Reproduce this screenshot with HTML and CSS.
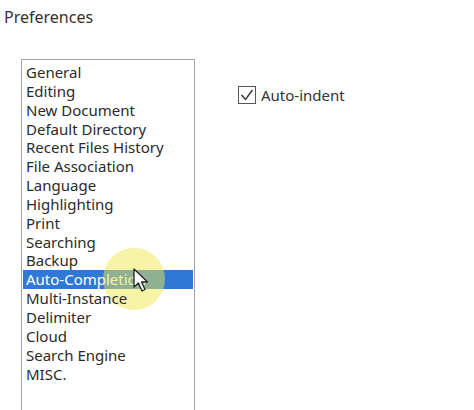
FILE: index.html
```html
<!DOCTYPE html>
<html>
<head>
<meta charset="utf-8">
<link rel="stylesheet" href="styles.css">
</head>
<body>
<div class="window">
  <div class="title">Preferences</div>
  <div class="content">
    <div class="listbox">
      <div class="item">General</div>
      <div class="item">Editing</div>
      <div class="item">New Document</div>
      <div class="item">Default Directory</div>
      <div class="item">Recent Files History</div>
      <div class="item">File Association</div>
      <div class="item">Language</div>
      <div class="item">Highlighting</div>
      <div class="item">Print</div>
      <div class="item">Searching</div>
      <div class="item">Backup</div>
      <div class="item selected">Auto-Completion
        <span class="halo"></span>
        <svg class="cursor" width="20" height="26" viewBox="0 0 20 26">
          <path d="M1 1 L1 19 L5.5 15 L9 23 L12 21.5 L8.5 14 L14.5 14 Z" fill="#fff" stroke="#222" stroke-width="1.3" stroke-linejoin="round"/>
        </svg>
      </div>
      <div class="item">Multi-Instance</div>
      <div class="item">Delimiter</div>
      <div class="item">Cloud</div>
      <div class="item">Search Engine</div>
      <div class="item">MISC.</div>
    </div>
    <div class="options">
      <label class="check">
        <span class="box">
          <svg width="16" height="16" viewBox="0 0 16 16"><path d="M2.5 8 L6.5 12.5 L13.5 3" fill="none" stroke="#333" stroke-width="1.4"/></svg>
        </span>
        <span class="check-label">Auto-indent</span>
      </label>
    </div>
  </div>
</div>
</body>
</html>
```

FILE: styles.css
```css
html, body {
  margin: 0;
  padding: 0;
  background: #fff;
  overflow: hidden;
}
body {
  width: 474px;
  height: 410px;
  font-family: "Noto Sans", "Open Sans", sans-serif;
  color: #2b2b2b;
}
.window {
  padding: 6px 0 0 4px;
}
.title {
  font-size: 16px;
  line-height: 22px;
  color: #333;
}
.content {
  display: flex;
  margin-top: 31px;
  padding-left: 17px;
}
.listbox {
  width: 174px;
  height: 351px;
  border: 1px solid #a4a4a4;
  border-bottom: none;
  padding: 3px 1px 0;
  box-sizing: border-box;
  overflow: hidden;
}
.item {
  position: relative;
  font-size: 15px;
  line-height: 18.85px;
  height: 18.85px;
  padding-left: 3px;
  white-space: nowrap;
}
.item.selected {
  background: #2f78d6;
  color: #fff;
}
.halo {
  position: absolute;
  left: 80px;
  top: -22px;
  width: 62px;
  height: 62px;
  border-radius: 50%;
  background: rgba(240, 232, 80, 0.5);
}
.cursor {
  position: absolute;
  left: 110px;
  top: -2px;
}
.options {
  padding: 26px 0 0 43px;
}
.check {
  display: flex;
  align-items: center;
  gap: 5px;
}
.box {
  width: 18px;
  height: 18px;
  border: 1px solid #555;
  display: flex;
  align-items: center;
  justify-content: center;
  box-sizing: border-box;
}
.check-label {
  font-size: 15px;
  color: #333;
}
```
